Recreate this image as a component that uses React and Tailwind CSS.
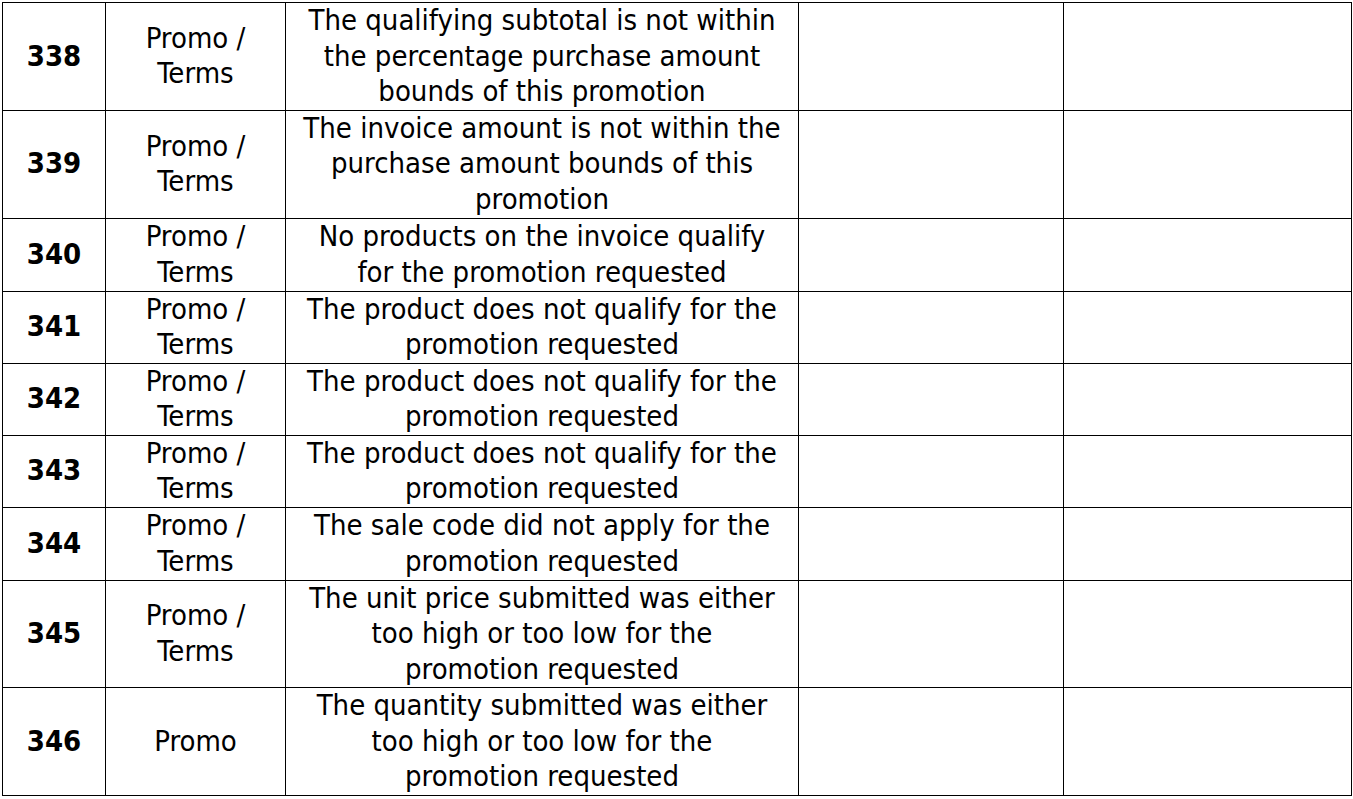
import React from "react";

const rows = [
  { code: "338", type: ["Promo /", "Terms"], desc: ["The qualifying subtotal is not within", "the percentage purchase amount", "bounds of this promotion"], h: "h-[105px]" },
  { code: "339", type: ["Promo /", "Terms"], desc: ["The invoice amount is not within the", "purchase amount bounds of this", "promotion"], h: "h-[108px]" },
  { code: "340", type: ["Promo /", "Terms"], desc: ["No products on the invoice qualify", "for the promotion requested"], h: "h-[73px]" },
  { code: "341", type: ["Promo /", "Terms"], desc: ["The product does not qualify for the", "promotion requested"], h: "h-[71px]" },
  { code: "342", type: ["Promo /", "Terms"], desc: ["The product does not qualify for the", "promotion requested"], h: "h-[71px]" },
  { code: "343", type: ["Promo /", "Terms"], desc: ["The product does not qualify for the", "promotion requested"], h: "h-[71px]" },
  { code: "344", type: ["Promo /", "Terms"], desc: ["The sale code did not apply for the", "promotion requested"], h: "h-[73px]" },
  { code: "345", type: ["Promo /", "Terms"], desc: ["The unit price submitted was either", "too high or too low for the", "promotion requested"], h: "h-[107px]" },
  { code: "346", type: ["Promo"], desc: ["The quantity submitted was either", "too high or too low for the", "promotion requested"], h: "h-[108px]" },
];

const Lines = ({ lines }) =>
  lines.map((l, i) => (
    <span key={i} className="block whitespace-nowrap">
      {l}
    </span>
  ));

export default function App() {
  return (
    <div className="min-h-screen bg-white pt-[2px] pl-[2px] font-['Tahoma','DejaVu_Sans_Condensed','DejaVu_Sans',sans-serif] text-[29px] leading-[35.5px] text-black">
      <table className="table-fixed border-collapse w-[1349px]">
        <colgroup>
          <col className="w-[103px]" />
          <col className="w-[180px]" />
          <col className="w-[513px]" />
          <col className="w-[265px]" />
          <col className="w-[288px]" />
        </colgroup>
        <tbody>
          {rows.map((r) => (
            <tr key={r.code} className={r.h}>
              <td className="border border-black text-center align-middle font-bold p-0">{r.code}</td>
              <td className="border border-black text-center align-middle p-0">
                <Lines lines={r.type} />
              </td>
              <td className="border border-black text-center align-middle p-0">
                <Lines lines={r.desc} />
              </td>
              <td className="border border-black p-0"></td>
              <td className="border border-black p-0"></td>
            </tr>
          ))}
        </tbody>
      </table>
    </div>
  );
}
